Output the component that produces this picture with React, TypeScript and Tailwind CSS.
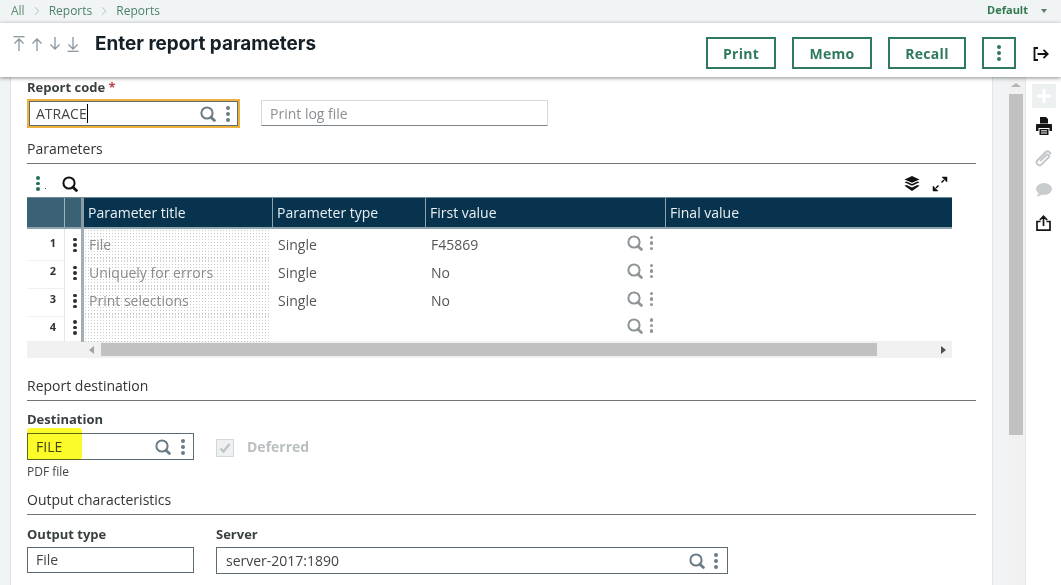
import { ChevronRight } from 'lucide-react';

const FONT = "font-['Open_Sans','Noto_Sans',sans-serif]";

function Search({ className = 'text-[#6b7b85]', size = 16 }: { className?: string; size?: number }) {
  return (
    <svg width={size} height={size} viewBox="0 0 16 16" className={className} fill="none" stroke="currentColor">
      <circle cx="7" cy="7" r="5.6" strokeWidth="2" />
      <path d="M11 11.200l3.400 3.200" strokeWidth="2.800" strokeLinecap="round" />
    </svg>
  );
}

function Dots({ className = 'bg-[#6b7b85]', size = 'w-[4px] h-[4px]' }: { className?: string; size?: string }) {
  return (
    <div className="flex flex-col gap-[2px]">
      <span className={`${size} rounded-full ${className}`} />
      <span className={`${size} rounded-full ${className}`} />
      <span className={`${size} rounded-full ${className}`} />
    </div>
  );
}

function Arrow({ up, bar }: { up?: boolean; bar?: boolean }) {
  return (
    <svg width="14" height="16" viewBox="0 0 14 16" fill="none" stroke="#8a979e" strokeWidth="1.3" className="w-[14px] h-[16px]">
      {up ? <path d="M7 15V3M2.500 7.500L7 3l4.500 4.500" /> : <path d="M7 1v12M2.500 8.500L7 13l4.500-4.500" />}
      {bar && (up ? <path d="M1.500 .7h11" /> : <path d="M1.500 15.300h11" />)}
    </svg>
  );
}

function Section({ title, className = '' }: { title: string; className?: string }) {
  return (
    <div className={`border-b border-[#6f7478] text-[14px] leading-[17px] text-[#333] ${className}`}>{title}</div>
  );
}

function Label({ children, className = '' }: { children: React.ReactNode; className?: string }) {
  return <div className={`text-[13px] leading-[18px] font-bold text-[#3a3f42] ${className}`}>{children}</div>;
}

function ActionButton({ label, width }: { label: string; width: string }) {
  return (
    <button className={`${width} h-[32px] border-2 border-[#2f7a5c] text-[14px] font-bold tracking-[0.3px] text-[#2f7a5c]`}>{label}</button>
  );
}

const ROWS = [
  { n: 1, title: 'File', type: 'Single', first: 'F45869' },
  { n: 2, title: 'Uniquely for errors', type: 'Single', first: 'No' },
  { n: 3, title: 'Print selections', type: 'Single', first: 'No' },
  { n: 4, title: '', type: '', first: '' },
];

const GRID = 'grid grid-cols-[37px_17px_3px_188px_1px_152px_1px_239px_1px_1fr]';

function ParamTable() {
  return (
    <div className="w-[925px]">
      <div className={`${GRID} h-[32px] border-t border-[#6d8795] border-b-2 border-b-[#8fa3ad] bg-[#08334e] text-[14px] leading-[29px] text-[#e8f0f3]`}>
        <div className="bg-[#3b6175]" />
        <div className="bg-[#3b6175] border-l border-[#9fb2bc]" />
        <div className="bg-[#8d9ba3]" />
        <div className="pl-[4px]">Parameter title</div>
        <div className="bg-[#8fa3ad]" />
        <div className="pl-[4px]">Parameter type</div>
        <div className="bg-[#8fa3ad]" />
        <div className="pl-[4px]">First value</div>
        <div className="bg-[#8fa3ad]" />
        <div className="pl-[4px]">Final value</div>
      </div>
      {ROWS.map((r) => (
        <div key={r.n} className={`${GRID} h-[28px] text-[14px] leading-[32px] text-[#555]`}>
          <div className="pr-[8px] text-right text-[11px] leading-[28px] font-bold text-[#333] border-b border-[#f0f0f0]">{r.n}</div>
          <div className="flex items-center justify-center pl-[4px] border-l border-[#e6e6e6]">
            <Dots className="bg-[#2b2f33]" size="w-[3.500px] h-[3.500px]" />
          </div>
          <div className="bg-[#a6adb2]" />
          <div className="pl-[5px] text-[#8a8a8a] mr-[3px] bg-[radial-gradient(#c9cccd_0.7px,transparent_0.8px)] bg-[length:3px_3px]">{r.title}</div>
          <div />
          <div className="pl-[5px]">{r.type}</div>
          <div />
          <div className="flex items-center justify-between pl-[5px] pr-[12px]">
            <span>{r.first}</span>
            <div className="flex items-center gap-[7px] -mt-[4px]">
              <Search className="text-[#8e9496]" />
              <Dots className="bg-[#8e9496]" size="w-[3.500px] h-[3.500px]" />
            </div>
          </div>
          <div />
          <div />
        </div>
      ))}
      <div className="h-[17px] bg-[#f1f1f1] flex items-center">
        <div className="w-[61px] pl-[62px] shrink-0 flex items-center">
          <span className="border-y-[4px] border-y-transparent border-r-[5px] border-r-[#a3a3a3]" />
        </div>
        <div className="ml-[12px] w-[776px] h-[13px] bg-[#c1c1c1] shrink-0" />
        <span className="ml-[64px] border-y-[4px] border-y-transparent border-l-[5px] border-l-[#505050]" />
      </div>
    </div>
  );
}

export default function App() {
  return (
    <div className={`h-[585px] w-[1061px] overflow-hidden flex flex-col bg-white ${FONT}`}>
      {/* breadcrumb */}
      <div className="h-[23px] shrink-0 bg-[#f0f4f4] flex items-center pb-[2px] pl-[11px] pr-[14px] text-[12px] text-[#4d8068]">
        <span className="text-[#5c8a74]">All</span>
        <ChevronRight size={14} strokeWidth={1.2} className="mx-[5px] text-[#9aa5a8]" />
        <span>Reports</span>
        <ChevronRight size={14} strokeWidth={1.2} className="mx-[5px] text-[#9aa5a8]" />
        <span>Reports</span>
        <span className="ml-auto text-[11px] font-bold text-[#2f7a4f]">Default</span>
        <span className="ml-[13px] border-x-[3.500px] border-x-transparent border-t-[4px] border-t-[#5f7a6c]" />
      </div>

      {/* header */}
      <div className="relative z-10 h-[54px] shrink-0 bg-white shadow-[0_1px_4px_rgba(0,0,0,0.45)] flex items-start">
        <div className="flex items-center gap-[4px] pl-[12px] pt-[13px]">
          <Arrow up bar />
          <Arrow up />
          <Arrow />
          <Arrow bar />
        </div>
        <h1 className="ml-[15px] mt-[8px] text-[18.900px] leading-[25px] font-bold font-['Inter',sans-serif] text-[#151f26]">Enter report parameters</h1>
        <div className="ml-auto flex items-center gap-[16px] pt-[14px]">
          <ActionButton label="Print" width="w-[70px]" />
          <ActionButton label="Memo" width="w-[80px]" />
          <ActionButton label="Recall" width="w-[78px]" />
          <button className="w-[34px] h-[32px] border-2 border-[#2f7a5c] flex items-center justify-center">
            <Dots className="bg-[#2f7a5c]" />
          </button>
        </div>
        <div className="w-[45px] pt-[23px] pl-[4px] flex justify-center">
          <svg width="16" height="16" viewBox="0 0 16 16" fill="none" stroke="#111" strokeWidth="1.8">
            <path d="M5 2H1.500v12H5M4.500 8h10M10.500 3.800L14.700 8l-4.200 4.200" />
          </svg>
        </div>
      </div>

      {/* body */}
      <div className="flex-1 flex min-h-0">
        <div className="w-[11px] shrink-0 bg-[#f0f4f4] border-r border-[#dfe3e3]" />
        <main className="relative w-[981px] shrink-0 pl-[16px] pr-[16px] pt-[1px] text-[14px] text-[#444]">
          <Label>
            Report code <span className="text-[#b8434f]">*</span>
          </Label>
          <div className="mt-[3px] flex items-start gap-[21px]">
            <div className="w-[213px] h-[29px] border-2 border-[#efb13c] shrink-0">
              <div className="h-full border border-[#5d6b73] flex items-center pl-[6px] pr-[7px]">
                <span className="border-r border-black leading-[19px]">ATRACE</span>
                <div className="ml-auto flex items-center gap-[10px]">
                  <Search />
                  <Dots />
                </div>
              </div>
            </div>
            <div className="mt-[1px] w-[287px] h-[26px] border border-[#d5d9dc] border-b-[#7b858b] pl-[8px] leading-[25px] text-[#8b8f92]">Print log file</div>
          </div>

          <Section title="Parameters" className="h-[24px] mt-[12px] w-[949px]" />
          <div className="w-[925px] h-[33px] flex items-center pt-[6px] pl-[9px] pr-[4px]">
            <Dots className="bg-[#1f6f55]" size="w-[3.500px] h-[3.500px]" />
            <span className="mt-[9px] ml-[5px] w-[1px] h-[1px] bg-[#555]" />
            <Search className="ml-[16px] text-[#111]" />
            <svg width="16" height="15" viewBox="0 0 16 15" className="ml-auto" fill="#111">
              <path d="M8 0l7.500 3.400L8 6.800 .5 3.400zM.5 6.300L2.500 5.400 8 7.900l5.500-2.500 2 .9L8 9.800zM.5 9.800l2-.9L8 11.400l5.500-2.500 2 .9L8 15z" />
            </svg>
            <svg width="16" height="16" viewBox="0 0 16 16" className="ml-[12px]" fill="#111" stroke="#111">
              <path d="M10 1h5v5zM1 15v-5l5 5z" strokeWidth="0.5" />
              <path d="M12 4l-2.500 2.500M4 12l2.500-2.500" strokeWidth="1.500" />
            </svg>
          </div>
          <ParamTable />

          <Section title="Report destination" className="h-[24px] mt-[19px] w-[949px]" />
          <Label className="mt-[9px]">Destination</Label>
          <div className="mt-[5px] flex items-center gap-[22px]">
            <div className="w-[167px] h-[27px] border border-[#5d6b73] flex items-center pl-[8px] pr-[8px] shrink-0">
              <span>FILE</span>
              <div className="ml-auto flex items-center gap-[10px]">
                <Search />
                <Dots />
              </div>
            </div>
            <div className="w-[18px] h-[18px] mt-[2px] border border-[#d3d7da] bg-[#eef0f1] flex items-center justify-center">
              <svg width="12" height="12" viewBox="0 0 12 12" fill="none" stroke="#bcc3c7" strokeWidth="2.200">
                <path d="M1.500 6.500l3 3 6-7.500" />
              </svg>
            </div>
            <span className="-ml-[9px] text-[14px] font-bold text-[#b9bec1]">Deferred</span>
          </div>
          <div className="mt-[4px] text-[12px] leading-[16px] text-[#444]">PDF file</div>
          <Section title="Output characteristics" className="h-[24px] mt-[11px] w-[949px]" />
          <div className="mt-[10px] flex gap-[22px]">
            <div>
              <Label>Output type</Label>
              <div className="mt-[4px] w-[167px] h-[26px] border border-[#5d6b73] pl-[8px] leading-[24px]">File</div>
            </div>
            <div>
              <Label>Server</Label>
              <div className="mt-[4px] w-[512px] h-[27px] border border-[#5d6b73] flex items-center pl-[9px] pr-[9px]">
                <span>server-2017:1890</span>
                <div className="ml-auto flex items-center gap-[9px]">
                  <Search />
                  <Dots />
                </div>
              </div>
            </div>
          </div>

          {/* yellow highlighter over the Destination field */}
          <div className="absolute left-[16px] top-[351px] w-[55px] h-[32px] rounded-[3px] bg-[#fbfb2a] mix-blend-multiply" />
        </main>

        {/* scrollbar */}
        <div className="w-[33px] shrink-0 flex bg-[#f1f1f1] border-l border-[#e2e6e6]">
          <div className="w-[16px] bg-[#f0f4f4]" />
          <div className="w-[14px] flex flex-col items-center">
            <span className="mt-[6px] border-x-[5px] border-x-transparent border-b-[4px] border-b-[#b5b5b5]" />
            <div className="mt-[7px] w-full h-[341px] bg-[#c1c1c1]" />
          </div>
        </div>

        {/* side actions */}
        <div className="flex-1 border-l border-[#e6e9e9] flex flex-col items-center pt-[7px]">
          <div className="w-[24px] h-[24px] bg-[#edf0f1] flex items-center justify-center">
            <svg width="16" height="16" viewBox="0 0 16 16" stroke="#fff" strokeWidth="3">
              <path d="M8 1v14M1 8h14" />
            </svg>
          </div>
          <svg width="16" height="18" viewBox="0 0 16 18" fill="#151515" className="mt-[9px]">
            <path d="M4 0h6l2 2v4.500H4zM1 7h14a1 1 0 0 1 1 1v6h-2.500v-3h-11v3H0V8a1 1 0 0 1 1-1zM3.500 12h9v6h-9z" />
            <path d="M5 13.800h6M5 16h6" stroke="#fff" strokeWidth="1" />
          </svg>
          <svg width="17" height="17" viewBox="0 0 17 17" fill="none" stroke="#c4c8ca" strokeWidth="2" className="mt-[15px]">
            <path d="M15.500 4.500a3 3 0 0 0-4.300-2.800L2.500 10.300a2.900 2.900 0 0 0 4.100 4.100l7-7a1.700 1.700 0 0 0-2.400-2.400l-6 6" />
          </svg>
          <svg width="16" height="14" viewBox="0 0 16 14" fill="#c9cccd" className="mt-[16px]">
            <ellipse cx="8" cy="6" rx="8" ry="6" />
            <path d="M3 9.500L.5 14l6-2.500z" />
          </svg>
          <svg width="15" height="16" viewBox="0 0 15 16" fill="none" stroke="#151515" strokeWidth="1.700" className="mt-[18px]">
            <path d="M4.500 6.500H1v8.700h13V6.500h-3.500M7.500 11V1.500M3.800 5L7.500 1.300 11.200 5" />
          </svg>
        </div>
      </div>
    </div>
  );
}
